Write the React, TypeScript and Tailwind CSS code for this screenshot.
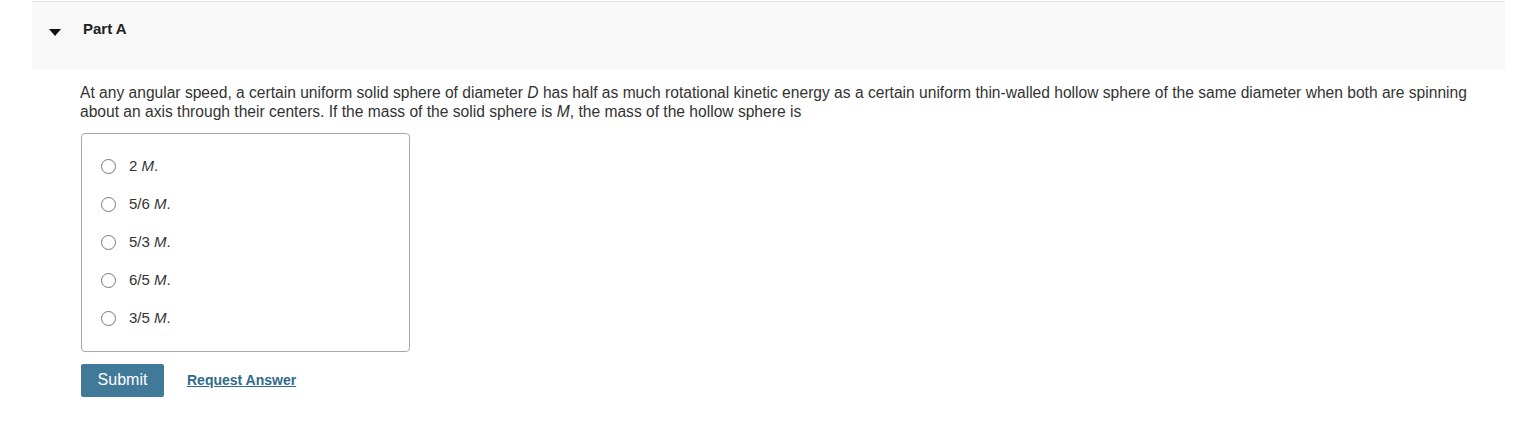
import React from "react";

const options = ["2", "5/6", "5/3", "6/5", "3/5"];

export default function App() {
  return (
    <div className="w-[1531px] h-[434px] bg-white text-[#333]" style={{ fontFamily: '"Liberation Sans", Arial, sans-serif' }}>
      <div className="pt-px pl-[32px] pr-[26px]">
        <div className="h-[68px] bg-[#f8f8f8] border-t border-[#e2e2e2] flex items-center">
          <svg width="12" height="7" viewBox="0 0 12 7" className="ml-[17px] mr-[22px] mt-[-6px]">
            <path d="M0 0 H12 L6 7 Z" fill="#111" />
          </svg>
          <span className="text-[15px] font-bold mt-[-13px] text-[#222]">Part A</span>
        </div>
      </div>
      <div className="pl-[80px] pr-[40px] pt-[14px]">
        <p className="text-[15.6px] leading-[19px] text-[#333]">
          At any angular speed, a certain uniform solid sphere of diameter <i>D</i> has half as much rotational kinetic energy as a certain uniform thin-walled hollow sphere of the same diameter when both are spinning about an axis through their centers. If the mass of the solid sphere is <i>M</i>, the mass of the hollow sphere is
        </p>
        <div className="mt-[12px] ml-px w-[329px] h-[219px] border border-[#a8a8a8] rounded-[4px] pt-[13px] pl-[19px]">
          {options.map((o) => (
            <div key={o} className="flex items-center h-[38px]">
              <span className="w-[15px] h-[15px] rounded-full border border-[#777] bg-white" />
              <span className="ml-[13px] text-[15px] text-[#333]">
                {o} <i>M</i>.
              </span>
            </div>
          ))}
        </div>
        <div className="mt-[12px] ml-px flex items-center">
          <button className="w-[83px] h-[33px] bg-[#417999] rounded-[2px] text-white text-[16px] pb-[2px]">Submit</button>
          <a href="#" className="ml-[23px] text-[14px] font-bold text-[#2f6a8c] underline">Request Answer</a>
        </div>
      </div>
    </div>
  );
}
